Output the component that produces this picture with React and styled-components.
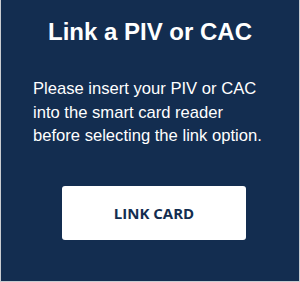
import styled, { createGlobalStyle } from "styled-components";

const GlobalStyle = createGlobalStyle`
  html, body {
    margin: 0;
    padding: 0;
    background: #ffffff;
  }
`;

function App() {
  return (
    <>
      <GlobalStyle />
      <Panel>
        <Title>Link a PIV or CAC</Title>
        <Desc>
          Please insert your PIV or CAC
          <br />
          into the smart card reader
          <br />
          before selecting the link option.
        </Desc>
        <Button type="button">LINK CARD</Button>
      </Panel>
    </>
  );
}

const Panel = styled.div`
  box-sizing: border-box;
  width: 300px;
  height: 282px;
  background: #132d50;
  border: 1px solid #c9ccd1;
  border-top: none;
  display: flex;
  flex-direction: column;
  align-items: center;
  padding-top: 18px;
  font-family: "Liberation Sans", Arial, sans-serif;
  color: #ffffff;
`;

const Title = styled.h2`
  margin: 0;
  font-size: 24px;
  font-weight: 700;
  line-height: 28px;
`;

const Desc = styled.p`
  margin: 31px 0 0;
  align-self: flex-start;
  padding-left: 32px;
  font-size: 16.6px;
  line-height: 23.5px;
`;

const Button = styled.button`
  margin-top: 38.5px;
  align-self: flex-start;
  margin-left: 61px;
  width: 184px;
  height: 54px;
  border: none;
  border-radius: 3px;
  background: #ffffff;
  color: #132d50;
  font-family: "Open Sans", sans-serif;
  font-weight: 700;
  font-size: 15px;
  cursor: pointer;
`;

export default App;
